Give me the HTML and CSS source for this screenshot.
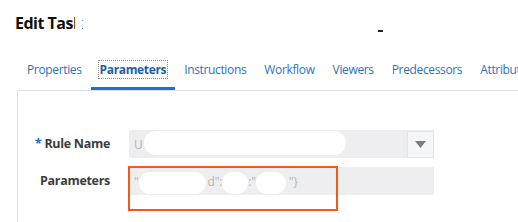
FILE: index.html
```html
<!DOCTYPE html>
<html lang="en">
<head>
    <meta charset="UTF-8">
    <meta name="viewport" content="width=device-width, initial-scale=1.0">
    <title>Edit Task</title>
    <link rel="stylesheet" href="styles.css">
</head>
<body>
    <div class="page">
        <h1 class="title">Edit Task<span class="cover-k"></span></h1>
        <span class="stray"></span>

        <nav class="tabs">
            <a href="#" class="tab">Properties</a>
            <a href="#" class="tab active"><span class="focus">Parameters</span></a>
            <a href="#" class="tab">Instructions</a>
            <a href="#" class="tab">Workflow</a>
            <a href="#" class="tab">Viewers</a>
            <a href="#" class="tab">Predecessors</a>
            <a href="#" class="tab">Attributes</a>
        </nav>

        <section class="panel">
            <div class="form">
                <div class="row">
                    <label class="label"><span class="req">*</span> Rule Name</label>
                    <div class="field select">
                        <span class="value">U<span class="blot blot-rule"></span></span>
                        <button class="drop">
                            <svg width="11" height="7" viewBox="0 0 11 7"><path d="M0 0h11L5.5 7z" fill="#7d7d7d"/></svg>
                        </button>
                    </div>
                </div>
                <div class="row">
                    <label class="label">Parameters</label>
                    <div class="field">
                        <span class="value">"<span class="blot blot-a"></span>d":<span class="blot blot-b"></span>:"<span class="blot blot-c"></span>"}</span>
                        <div class="highlight"></div>
                    </div>
                </div>
            </div>
        </section>
    </div>
</body>
</html>
```

FILE: styles.css
```css
body, html {
    margin: 0;
    padding: 0;
    background: #fff;
    font-family: "Open Sans", "Noto Sans", Arial, sans-serif;
}
.page {
    width: 518px;
    height: 222px;
    overflow: hidden;
    position: relative;
}
.title {
    margin: 0;
    padding: 13px 0 0 15px;
    font-size: 16px;
    font-weight: 700;
    color: #111;
    letter-spacing: -0.5px;
    height: 30px;
    line-height: 20px;
    position: relative;
    display: inline-block;
}
.cover-k {
    position: absolute;
    right: 0;
    top: 13px;
    width: 7px;
    height: 20px;
    background: #fff;
}
.stray {
    position: absolute;
    left: 378px;
    top: 30px;
    width: 5px;
    height: 2px;
    background: #222;
}
.tabs {
    display: flex;
    padding: 14px 0 0 18px;
    white-space: nowrap;
}
.tab {
    font-size: 12px;
    color: #2b74bd;
    text-decoration: none;
    padding: 3px 9px 8px;
    line-height: 19px;
    border-bottom: 3px solid transparent;
    letter-spacing: -0.35px;
}
.tab.active {
    font-weight: 700;
    color: #1d5f9f;
    border-bottom-color: #1f73c6;
    padding: 3px 8px 8px 8px;
}
.focus {
    outline: 1px dotted #8a8a8a;
    outline-offset: 0;
    padding: 0 1px;
}
.panel {
    margin-left: 17px;
    border-top: 1px solid #dde2e7;
    border-left: 1px solid #dde2e7;
    border-top-left-radius: 2px;
    height: 140px;
}
.form {
    padding-top: 39px;
    display: flex;
    flex-direction: column;
    gap: 9px;
}
.row {
    display: flex;
    align-items: center;
}
.label {
    width: 92px;
    text-align: right;
    font-size: 12.5px;
    font-weight: 700;
    color: #3c3c3c;
    letter-spacing: -0.3px;
    padding-right: 19px;
    margin-top: -2px;
}
.req {
    color: #1a6fc9;
    font-size: 13px;
}
.field {
    position: relative;
    width: 305px;
    height: 28px;
    background: #eeeef0;
    border-radius: 1px;
    display: flex;
    align-items: center;
    font-size: 12px;
    color: #b5b5b5;
}
.value {
    padding-left: 5px;
    white-space: nowrap;
    display: flex;
    align-items: center;
    letter-spacing: -0.2px;
}
.drop {
    position: absolute;
    right: 0;
    top: 1px;
    width: 27px;
    height: 27px;
    border: 1px solid #e2e4e8;
    background: #f5f6f8;
    display: flex;
    align-items: center;
    justify-content: center;
    padding: 0;
}
.blot {
    display: inline-block;
    background: #fff;
    border-radius: 12px;
    height: 22px;
}
.blot-rule {
    margin-left: 1px;
    width: 202px;
    height: 24px;
    margin-top: -3px;
}
.blot-a {
    margin-left: 0;
    width: 67px;
    margin-right: 2px;
    margin-top: 4px;
}
.blot-b {
    width: 26px;
    margin-top: 4px;
}
.blot-c {
    width: 30px;
    margin-top: 4px;
    margin-right: 3px;
}
.highlight {
    position: absolute;
    left: -1px;
    top: -1px;
    width: 206px;
    height: 41px;
    border: 2px solid #f35a14;
}
```
